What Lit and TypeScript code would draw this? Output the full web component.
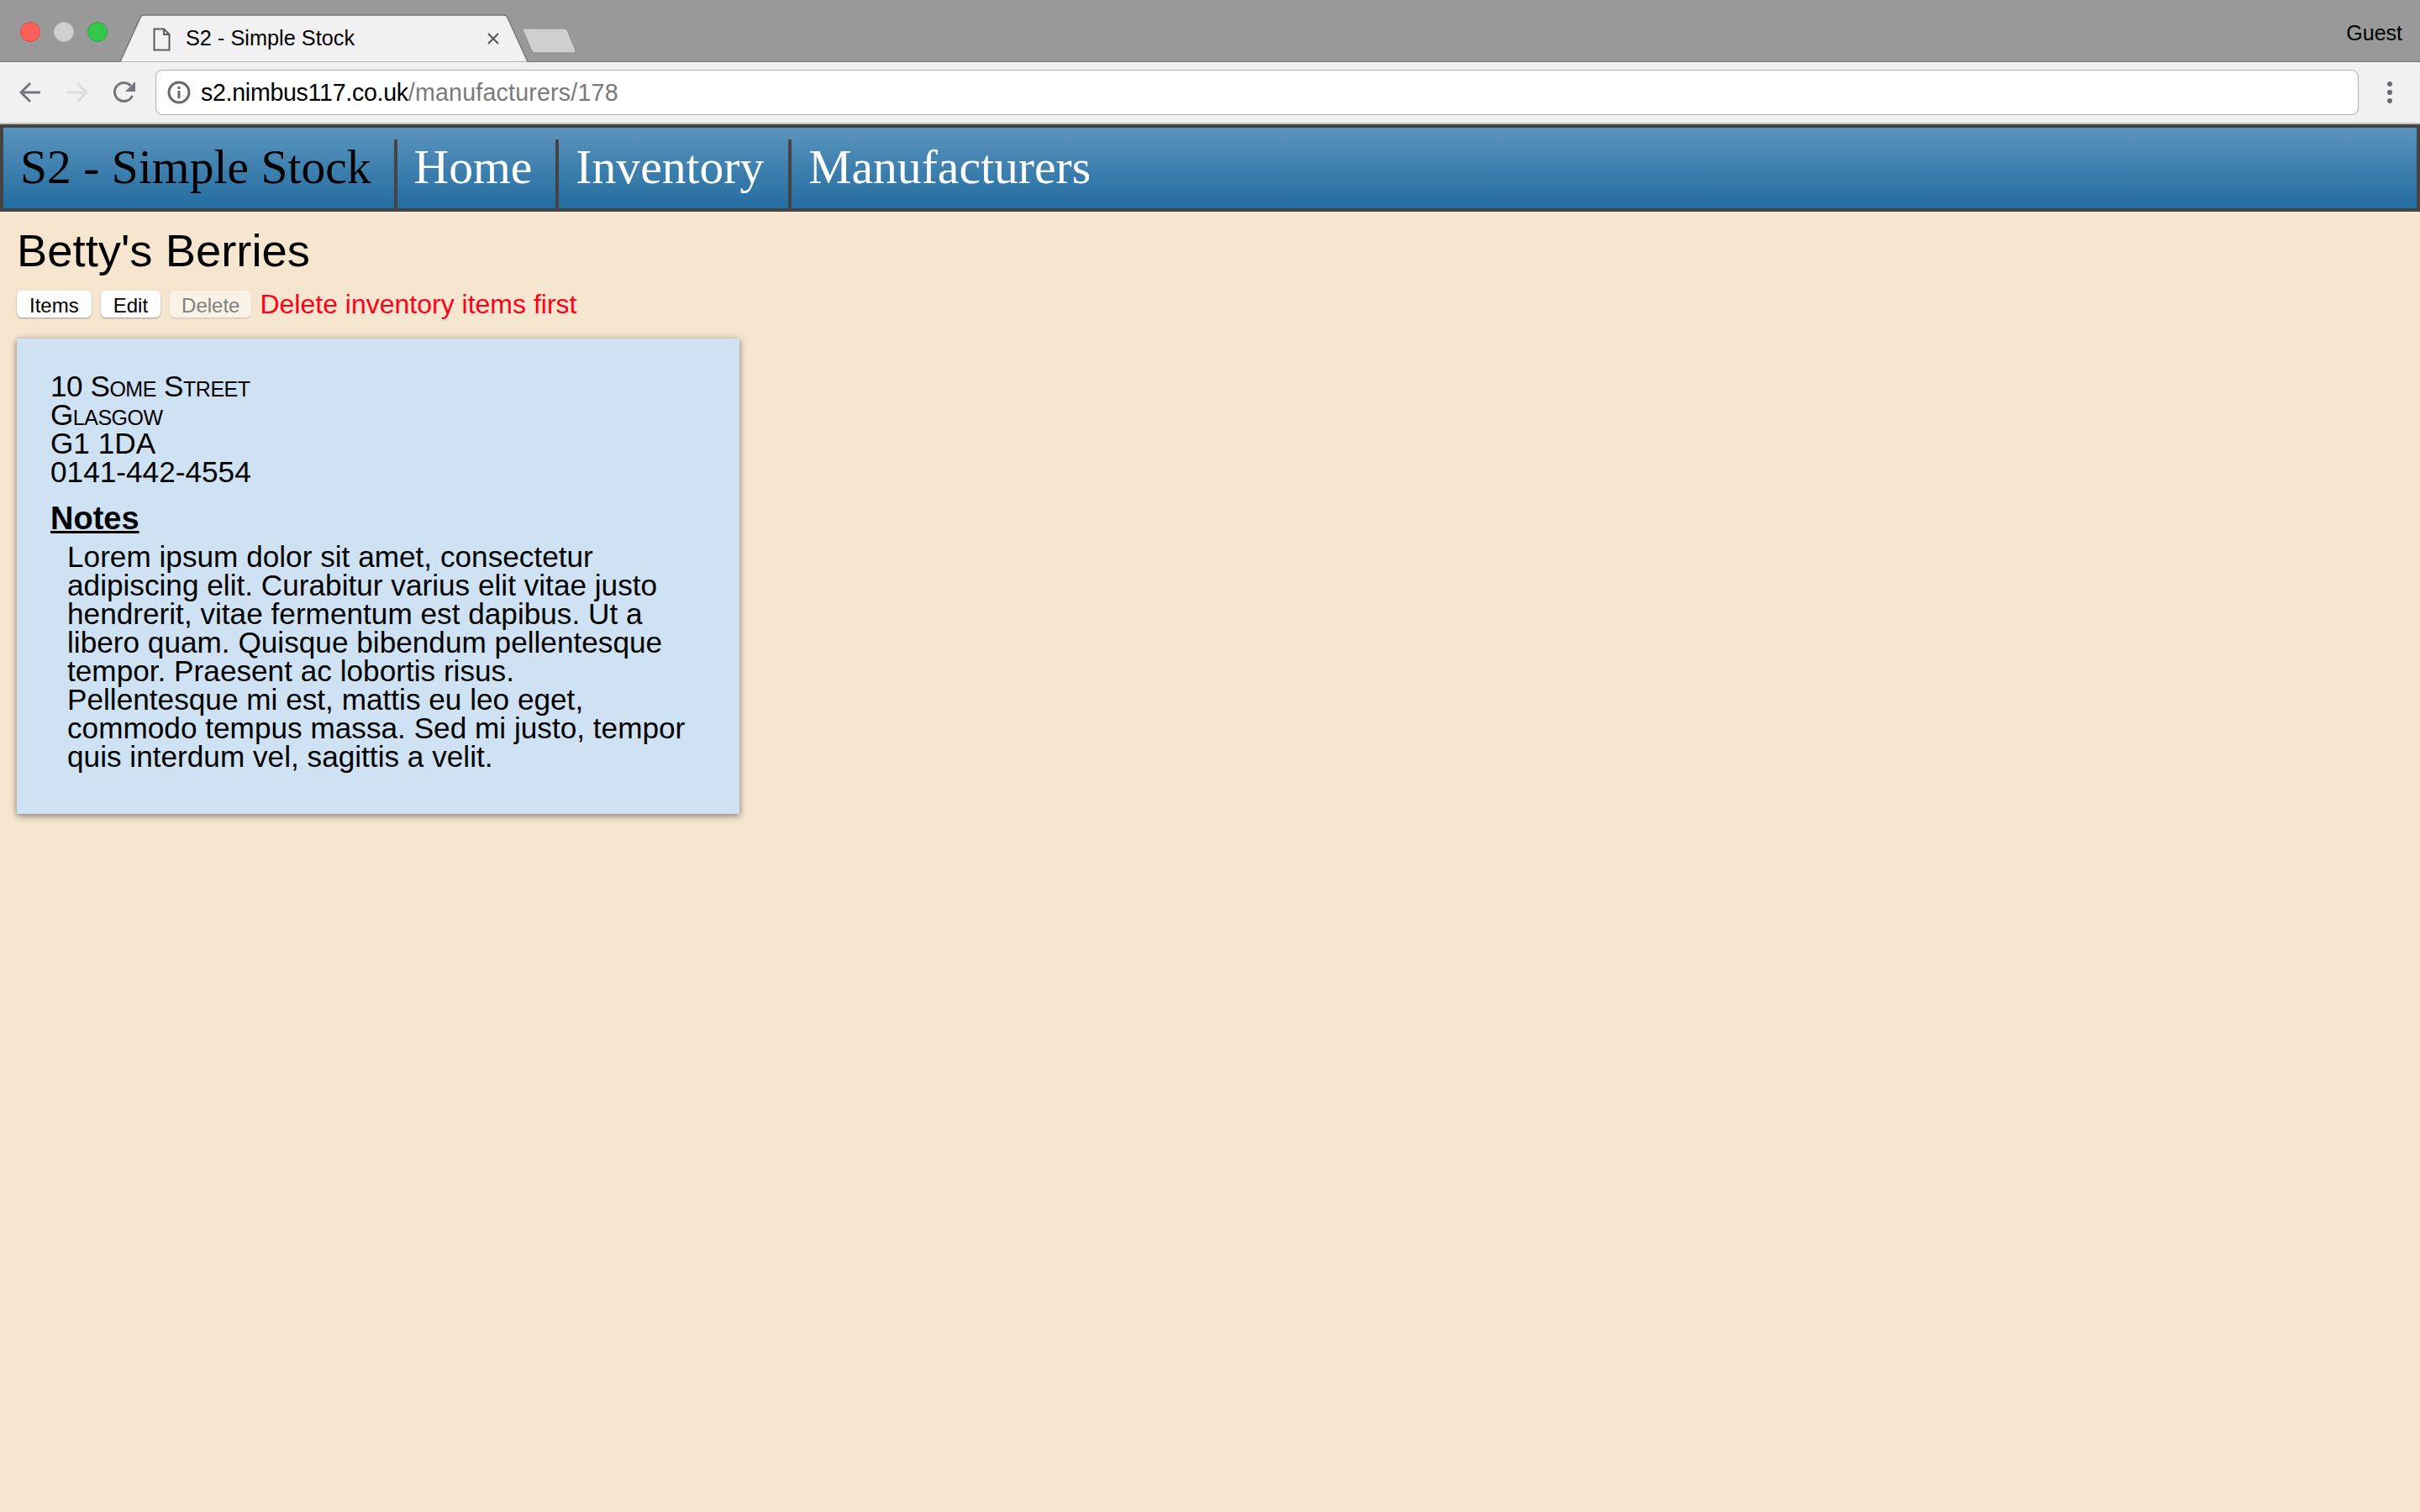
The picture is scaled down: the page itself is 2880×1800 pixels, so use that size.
import { LitElement, html, css } from "lit";
import { customElement } from "lit/decorators.js";

@customElement("app-root")
export class AppRoot extends LitElement {
  static styles = css`
    :host { display: block; width: 2880px; height: 1800px; background: #f6e6d0; font-family: "Liberation Sans", Arial, sans-serif; color: #000; overflow: hidden; }
    svg { display: block; flex: none; }
    .strip { height: 73px; background: #999; border-bottom: 1px solid #777; display: flex; position: relative; }
    .lights { display: flex; gap: 16px; padding: 26px 0 0 24px; width: 119px; box-sizing: border-box; flex: none; }
    .light { width: 24px; height: 24px; border-radius: 50%; box-sizing: border-box; border: 1px solid; flex: none; }
    .red { background: #ff6159; border-color: #e2463f; }
    .grey { background: #d0d0d0; border-color: #c4c4c4; }
    .green { background: #34c84a; border-color: #28a83a; }
    .tabshape { position: absolute; left: 0; top: 0; }
    .tab { position: relative; margin-left: 24px; width: 485px; height: 73px; display: flex; align-items: flex-start; padding: 33px 0 0 39px; box-sizing: border-box; flex: none; }
    .tabtitle { position: relative; font-size: 25.3px; line-height: 28px; margin: -2px 0 0 18px; width: 359px; white-space: nowrap; }
    .close { position: relative; margin-top: 6px; }
    .fileicon { position: relative; }
    .newtab { margin: 33px 0 0 -8px; }
    .guest { margin-left: auto; padding: 24px 21px 0 0; font-size: 25px; line-height: 30px; }
    .toolbar { height: 74px; background: #f1f1f1; border-bottom: 2px solid #c4c4c4; display: flex; align-items: center; box-sizing: border-box; padding-left: 23px; }
    .toolbar .fwd { margin-left: 30px; }
    .toolbar .reload { margin-left: 29px; }
    .omnibox { margin-left: 23px; width: 2622px; height: 54px; box-sizing: border-box; background: #fff; border: 1px solid #b0b0b0; border-radius: 8px; display: flex; align-items: center; padding-left: 13px; font-size: 28.6px; }
    .url { margin-left: 12px; white-space: nowrap; letter-spacing: -0.3px; }
    .path { color: #7a7a7a; letter-spacing: 0.2px; }
    .kebab { margin-left: 33px; }
    .nav { height: 104px; box-sizing: border-box; border: 4px solid #444; background: linear-gradient(#5a94bd, #236da1); display: flex; padding-top: 14px; font-family: "Liberation Serif", "Times New Roman", serif; font-size: 57.6px; line-height: 66px; color: #fff; }
    .brand { color: #000; padding: 0 27px 0 20px; border-right: 4px solid #444; }
    .link { padding: 0 28px 0 20px; border-right: 4px solid #444; }
    .link.wide { padding-right: 29px; }
    .link:last-child { border-right: 0; }
    main { padding: 15px 20px 0; }
    h1 { margin: 0; font-size: 54.4px; font-weight: 400; line-height: 64px; }
    .actions { display: flex; align-items: center; margin-top: 11px; gap: 11px; height: 40px; }
    .btn { height: 32px; box-sizing: border-box; border-radius: 6px; background: #fff; box-shadow: 0 1px 2px rgba(0,0,0,.35); font-size: 24px; line-height: 30px; padding: 3px 15px 0; color: #000; }
    .btn.off { background: #faf2e6; color: #808080; box-shadow: 0 1px 2px rgba(0,0,0,.18); padding: 3px 14px 0; }
    .err { color: #ff0019; font-size: 32px; margin-left: -1px; }
    .card { margin-top: 21px; width: 860px; height: 566px; box-sizing: border-box; background: #cfe2f3; box-shadow: 0 2px 8px rgba(0,0,0,.5); padding: 40px 40px 0; font-size: 35.2px; line-height: 34px; }
    .addr { font-variant: small-caps; letter-spacing: -0.5px; }
    h2 { margin: 16px 0 0; font-size: 38px; line-height: 44px; font-weight: 700; text-decoration: underline; }
    .notes { margin: 7px 0 0 20px; width: 745px; }
  `;

  render() {
    return html`
      <div class="strip">
        <div class="lights"><span class="light red"></span><span class="light grey"></span><span class="light green"></span></div>
        <div class="tab">
          <svg class="tabshape" width="485" height="74" viewBox="0 0 485 74"><path d="M0 73.5 L24 21 Q25 18 29 18 H456 Q460 18 461 21 L485 73.5" fill="#f1f1f1" stroke="#777" stroke-width="1.5"/></svg>
          <svg class="fileicon" width="21" height="28" viewBox="0 0 21 28"><path d="M1.5 1.5 H13 L19.5 8 V26.5 H1.5 Z M13 1.5 V8 H19.5" fill="none" stroke="#5a5a5a" stroke-width="2"/></svg>
          <span class="tabtitle">S2 - Simple Stock</span>
          <svg class="close" width="14" height="14" viewBox="0 0 14 14"><path d="M1 1 L13 13 M13 1 L1 13" stroke="#555" stroke-width="2"/></svg>
        </div>
        <svg class="newtab" width="66" height="32" viewBox="0 0 66 32"><path d="M2 2.5 Q1 1 3 1 H52 Q54 1 55 3 L65 27 Q65 30 63 30 H16 Q14 30 13 28 Z" fill="#cfcfcf" stroke="#8a8a8a" stroke-width="1"/></svg>
        <div class="guest">Guest</div>
      </div>
      <div class="toolbar">
        <svg width="26" height="26" viewBox="0 0 26 26"><path d="M25 13 H3 M13 2 L2 13 L13 24" fill="none" stroke="#74777c" stroke-width="3"/></svg>
        <svg class="fwd" width="26" height="26" viewBox="0 0 26 26"><path d="M1 13 H23 M13 2 L24 13 L13 24" fill="none" stroke="#dcdcdc" stroke-width="3"/></svg>
        <svg class="reload" width="28" height="28" viewBox="0 0 28 28"><path d="M23.5 18 A11 11 0 1 1 21.5 6" fill="none" stroke="#74777c" stroke-width="3"/><path d="M27 1 V13 H15 Z" fill="#74777c"/></svg>
        <div class="omnibox">
          <svg width="28" height="28" viewBox="0 0 28 28"><circle cx="14" cy="14" r="12" fill="none" stroke="#676b70" stroke-width="3"/><rect x="12.5" y="12" width="3" height="9" fill="#676b70"/><rect x="12.5" y="7" width="3" height="3" fill="#676b70"/></svg>
          <span class="url">s2.nimbus117.co.uk<span class="path">/manufacturers/178</span></span>
        </div>
        <svg class="kebab" width="8" height="28" viewBox="0 0 8 28"><circle cx="4" cy="4" r="3" fill="#6b6b70"/><circle cx="4" cy="14" r="3" fill="#6b6b70"/><circle cx="4" cy="24" r="3" fill="#6b6b70"/></svg>
      </div>
      <nav class="nav">
        <div class="brand">S2 - Simple Stock</div>
        <div class="link">Home</div>
        <div class="link wide">Inventory</div>
        <div class="link">Manufacturers</div>
      </nav>
      <main>
        <h1>Betty's Berries</h1>
        <div class="actions">
          <span class="btn">Items</span><span class="btn">Edit</span><span class="btn off">Delete</span>
          <span class="err">Delete inventory items first</span>
        </div>
        <section class="card">
          <div class="addr">10 Some Street<br />Glasgow</div>
          <div>G1 1DA<br />0141-442-4554</div>
          <h2>Notes</h2>
          <p class="notes">Lorem ipsum dolor sit amet, consectetur adipiscing elit. Curabitur varius elit vitae justo hendrerit, vitae fermentum est dapibus. Ut a libero quam. Quisque bibendum pellentesque tempor. Praesent ac lobortis risus.<br />Pellentesque mi est, mattis eu leo eget, commodo tempus massa. Sed mi justo, tempor quis interdum vel, sagittis a velit.</p>
        </section>
      </main>
    `;
  }
}
